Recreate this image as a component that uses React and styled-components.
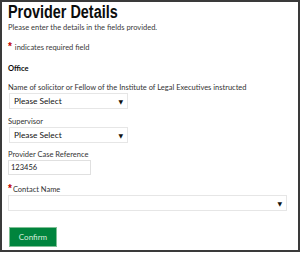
import React from "react"
import styled, { createGlobalStyle } from "styled-components"

const Global = createGlobalStyle`
    html, body {
        margin: 0;
        padding: 0;
        background: #ffffff;
    }
    body {
        font-family: Lato, "Liberation Sans", Arial, sans-serif;
        color: #0b0c0c;
    }
`

const Frame = styled.div`
    width: 300px;
    height: 252px;
    box-sizing: border-box;
    border: 2px solid #3a3a3a;
    box-shadow: 0 2px 0 #b8b8b8;
    padding: 0 6px;
    overflow: hidden;
`

const Title = styled.h1`
    margin: 0;
    height: 21px;
    font-family: "Liberation Sans", Arial, sans-serif;
    font-size: 18px;
    font-weight: 700;
    line-height: 21px;
    white-space: nowrap;
    transform: scaleX(0.8);
    transform-origin: left center;
`

const Lead = styled.p`
    margin: 0;
    font-size: 7.5px;
    line-height: 9px;
    color: #3a3a3a;
`

const Required = styled.p`
    margin: 10px 0 0;
    font-size: 7.5px;
    line-height: 9px;
    color: #3a3a3a;
`

const Star = styled.span`
    color: #c00000;
    font-family: "Liberation Sans", Arial, sans-serif;
    font-size: 10px;
    font-weight: 700;
    margin-right: 1px;
`

const Section = styled.h2`
    margin: 12px 0 0;
    font-size: 7.5px;
    font-weight: 700;
    line-height: 9px;
`

const Field = styled.div`
    margin-top: ${p => p.gap}px;
    display: flex;
    flex-direction: column;
    align-items: flex-start;
`

const Label = styled.label`
    font-size: 7.5px;
    line-height: 9px;
    color: #333;
`

const Select = styled.div`
    margin-top: 1px;
    margin-left: ${p => p.inset || 0}px;
    width: ${p => p.w}px;
    height: 16px;
    box-sizing: border-box;
    border: 1px solid #e6e6e6;
    display: flex;
    align-items: center;
    justify-content: space-between;
    padding: 0 4px 0 4px;
    font-size: 8.3px;
    color: #111;
`

const Arrow = styled.span`
    font-family: "DejaVu Sans", sans-serif;
    font-size: 6px;
    color: #111;
`

const Input = styled.div`
    margin-top: 1px;
    width: ${p => p.w}px;
    height: 15px;
    box-sizing: border-box;
    border: 1px solid #e0e0e0;
    display: flex;
    align-items: center;
    padding: 0 2px;
    font-size: 7.5px;
    color: #222;
`

const Button = styled.button`
    margin: 16px 0 0 1px;
    width: 48px;
    height: 20px;
    border: 1px solid #7fbf95;
    background: #00843d;
    color: #d8eedf;
    font-family: Lato, "Liberation Sans", Arial, sans-serif;
    font-size: 8px;
    padding: 0;
`

export default function App() {
    return (
        <>
            <Global />
            <Frame>
                <Title>Provider Details</Title>
                <Lead>Please enter the details in the fields provided.</Lead>
                <Required><Star>*</Star> indicates required field</Required>
                <Section>Office</Section>
                <Field gap={10}>
                    <Label>Name of solicitor or Fellow of the Institute of Legal Executives instructed</Label>
                    <Select w={119} inset={1}>Please Select<Arrow>▼</Arrow></Select>
                </Field>
                <Field gap={8}>
                    <Label>Supervisor</Label>
                    <Select w={119} inset={1}>Please Select<Arrow>▼</Arrow></Select>
                </Field>
                <Field gap={7}>
                    <Label>Provider Case Reference</Label>
                    <Input w={83}>123456</Input>
                </Field>
                <Field gap={9}>
                    <Label><Star>*</Star>Contact Name</Label>
                    <Select w={279}><span /><Arrow>▼</Arrow></Select>
                </Field>
                <Button>Confirm</Button>
            </Frame>
        </>
    )
}
